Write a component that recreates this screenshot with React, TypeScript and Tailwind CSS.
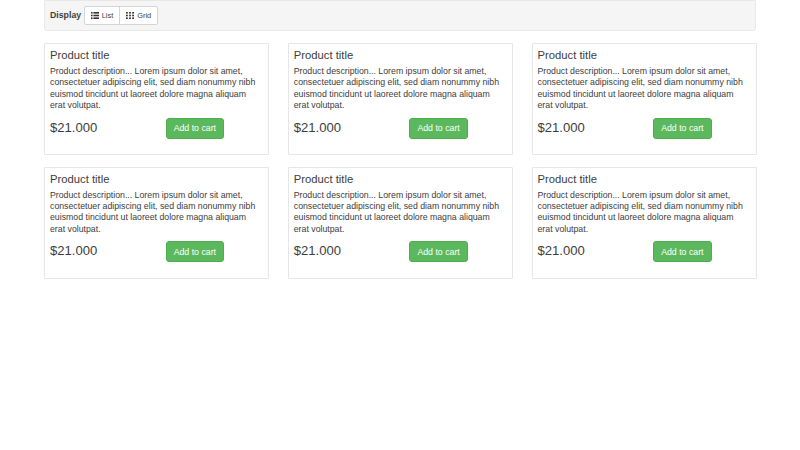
import React from "react";

const Card = () => (
  <div className="h-[112px] border border-[#e6e6e6] rounded-[1px] bg-white pt-[4px] pl-[5px] pr-[5px] text-[#3d3d3d]">
    <h3 className="text-[11.25px] leading-[14px] mb-[4px] font-normal text-[#3d3d3d]">Product title</h3>
    <p className="text-[8.75px] leading-[11.4px] m-0">
      Product description... Lorem ipsum dolor sit amet, consectetuer adipiscing elit, sed diam nonummy nibh euismod tincidunt ut laoreet dolore magna aliquam erat volutpat.
    </p>
    <div className="flex items-start mt-[6.2px]">
      <div className="w-[115.6px] text-[13.1px] leading-[17px] pt-[0.8px]">$21.000</div>
      <button className="w-[58.5px] h-[21px] rounded-[3px] border border-[#4cae4c] bg-[#5cb85c] text-white text-[8.75px] leading-[14px]">Add to cart</button>
    </div>
  </div>
);

const ListIcon = () => (
  <svg width="8" height="7" viewBox="0 0 8 7" fill="#333333">
    <rect x="0" y="0" width="1.6" height="1.6" />
    <rect x="2.4" y="0" width="5.6" height="1.6" />
    <rect x="0" y="2.7" width="1.6" height="1.6" />
    <rect x="2.4" y="2.7" width="5.6" height="1.6" />
    <rect x="0" y="5.4" width="1.6" height="1.6" />
    <rect x="2.4" y="5.4" width="5.6" height="1.6" />
  </svg>
);

const GridIcon = () => (
  <svg width="8" height="7" viewBox="0 0 8 7" fill="#333333">
    {[0, 3.1, 6.2].map((x) =>
      [0, 2.7, 5.4].map((y) => <rect key={`${x}-${y}`} x={x} y={y} width="1.8" height="1.6" />)
    )}
  </svg>
);

export default function App() {
  return (
    <div className="min-h-[450px] bg-white px-[44px] font-['Liberation_Sans',Arial,sans-serif]">
      <div className="h-[31px] w-[712px] flex items-center bg-[#f5f5f5] border border-[#e8e8e8] rounded-b-[3px] pl-[5px]">
        <span className="text-[8.75px] font-bold text-[#3d3d3d] mr-[3px]">Display</span>
        <div className="flex h-[19px] rounded-[2px] border border-[#d4d4d4] bg-white text-[7.5px] text-[#444444]">
          <div className="flex items-center gap-[2.5px] w-[35px] pl-[6px] border-r border-[#d4d4d4]">
            <ListIcon />
            <span>List</span>
          </div>
          <div className="flex items-center gap-[3px] w-[37px] pl-[6px]">
            <GridIcon />
            <span>Grid</span>
          </div>
        </div>
      </div>
      <div className="grid grid-cols-[225px_225px_225px] gap-x-[18.75px] gap-y-[11.6px] mt-[12px]">
        <Card />
        <Card />
        <Card />
        <Card />
        <Card />
        <Card />
      </div>
    </div>
  );
}
